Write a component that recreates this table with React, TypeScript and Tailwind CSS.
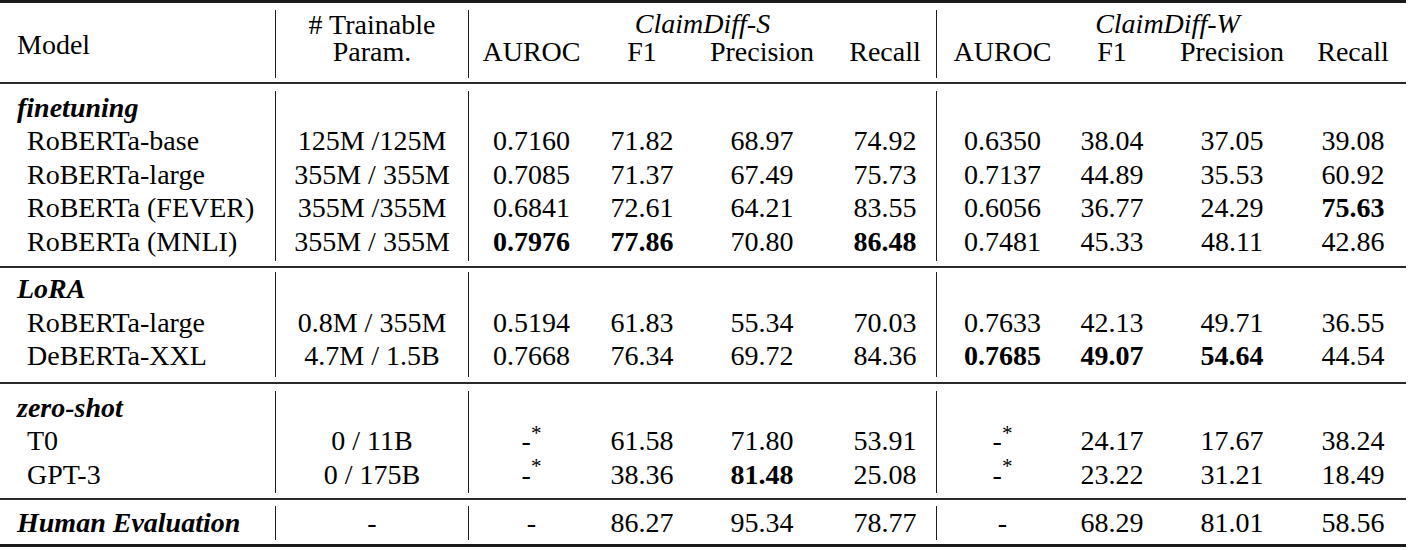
import React from 'react';

type Row = {
  label: string;
  cat?: boolean;
  param?: string;
  vals?: string[];
  bold?: number[];
};

type Section = { rows: Row[]; extra: number; pt: string; pb: string };

const COLS = 'grid grid-cols-[275px_193px_126px_96px_144px_102px_132px_88px_152px_90px]';
const VLINE = 'border-l border-[#1c1c1c]';

const sections: Section[] = [
  {
    extra: 2.5,
    pt: 'pt-[7px]',
    pb: 'pb-[5.5px]',
    rows: [
      { label: 'finetuning', cat: true },
      { label: 'RoBERTa-base', param: '125M /125M', vals: ['0.7160', '71.82', '68.97', '74.92', '0.6350', '38.04', '37.05', '39.08'] },
      { label: 'RoBERTa-large', param: '355M / 355M', vals: ['0.7085', '71.37', '67.49', '75.73', '0.7137', '44.89', '35.53', '60.92'] },
      { label: 'RoBERTa (FEVER)', param: '355M /355M', vals: ['0.6841', '72.61', '64.21', '83.55', '0.6056', '36.77', '24.29', '75.63'], bold: [7] },
      { label: 'RoBERTa (MNLI)', param: '355M / 355M', vals: ['0.7976', '77.86', '70.80', '86.48', '0.7481', '45.33', '48.11', '42.86'], bold: [0, 1, 3] },
    ],
  },
  {
    extra: 4.5,
    pt: 'pt-[4.5px]',
    pb: 'pb-[5px]',
    rows: [
      { label: 'LoRA', cat: true },
      { label: 'RoBERTa-large', param: '0.8M / 355M', vals: ['0.5194', '61.83', '55.34', '70.03', '0.7633', '42.13', '49.71', '36.55'] },
      { label: 'DeBERTa-XXL', param: '4.7M / 1.5B', vals: ['0.7668', '76.34', '69.72', '84.36', '0.7685', '49.07', '54.64', '44.54'], bold: [4, 5, 6] },
    ],
  },
  {
    extra: 2,
    pt: 'pt-[7px]',
    pb: 'pb-[5px]',
    rows: [
      { label: 'zero-shot', cat: true },
      { label: 'T0', param: '0 / 11B', vals: ['-*', '61.58', '71.80', '53.91', '-*', '24.17', '17.67', '38.24'] },
      { label: 'GPT-3', param: '0 / 175B', vals: ['-*', '38.36', '81.48', '25.08', '-*', '23.22', '31.21', '18.49'], bold: [2] },
    ],
  },
  {
    extra: 0,
    pt: 'pt-[6.5px]',
    pb: 'pb-[4.5px]',
    rows: [
      { label: 'Human Evaluation', cat: true, param: '-', vals: ['-', '86.27', '95.34', '78.77', '-', '68.29', '81.01', '58.56'] },
    ],
  },
];

function Value({ v }: { v: string }) {
  if (v === '-*') {
    return (
      <>
        -<sup>*</sup>
      </>
    );
  }
  return <>{v}</>;
}

function BodyRow({ row, last, extra }: { row: Row; last: boolean; extra: number }) {
  const pad = last ? { paddingBottom: extra } : undefined;
  const vals = row.vals ?? Array(8).fill('');
  return (
    <>
      <div
        style={pad}
        className={`leading-[33.5px] whitespace-nowrap ${row.cat ? 'pl-[17px] font-bold italic' : 'pl-[27px]'}`}
      >
        {row.label}
      </div>
      <div style={pad} className={`${VLINE} leading-[33.5px] text-center whitespace-nowrap`}>
        {row.param ?? ''}
      </div>
      {vals.map((v, i) => (
        <div
          key={i}
          style={pad}
          className={`leading-[33.5px] text-center whitespace-nowrap ${i === 0 || i === 4 ? VLINE : ''} ${row.bold?.includes(i) ? 'font-bold' : ''}`}
        >
          <Value v={v} />
        </div>
      ))}
    </>
  );
}

export default function App() {
  return (
    <div className="h-[550px] w-[1409px] overflow-hidden bg-white font-['Liberation_Serif',serif] text-[28px] text-black">
      <div className="w-[1406px]">
        {/* top rule */}
        <div className="h-[2.5px] bg-[#1a1a1a]" />

        {/* Header */}
        <div className="pt-[7.5px] pb-[4px]">
          <div className={`${COLS} h-[68px] grid-rows-[27.5px_27px_13.5px]`}>
            <div className="row-span-3 pl-[17px] pt-[20.5px] leading-[27px]">Model</div>
            <div className={`${VLINE} row-span-3 pt-[0.5px] text-center leading-[27px]`}>
              <div>
                # Trainable
              </div>
              <div>Param.</div>
            </div>
            <div className={`${VLINE} col-span-4 text-center italic leading-[27.5px]`}>ClaimDiff-S</div>
            <div className={`${VLINE} col-span-4 text-center italic leading-[27.5px]`}>ClaimDiff-W</div>
            {['AUROC', 'F1', 'Precision', 'Recall', 'AUROC', 'F1', 'Precision', 'Recall'].map((h, i) => (
              <div key={i} className={`text-center leading-[27px] ${i === 0 || i === 4 ? VLINE : ''}`}>
                {h}
              </div>
            ))}
            {Array.from({ length: 8 }).map((_, i) => (
              <div key={i} className={i === 0 || i === 4 ? VLINE : ''} />
            ))}
          </div>
        </div>

        {sections.map((s, si) => (
          <div key={si}>
            <div className="h-[1.5px] bg-[#2a2a2a]" />
            <div className={`${s.pt} ${s.pb}`}>
              <div className={COLS}>
                {s.rows.map((r, ri) => (
                  <BodyRow key={ri} row={r} last={ri === s.rows.length - 1} extra={s.extra} />
                ))}
              </div>
            </div>
          </div>
        ))}

        {/* bottom rule */}
        <div className="h-[2.5px] bg-[#1a1a1a]" />
      </div>
    </div>
  );
}
